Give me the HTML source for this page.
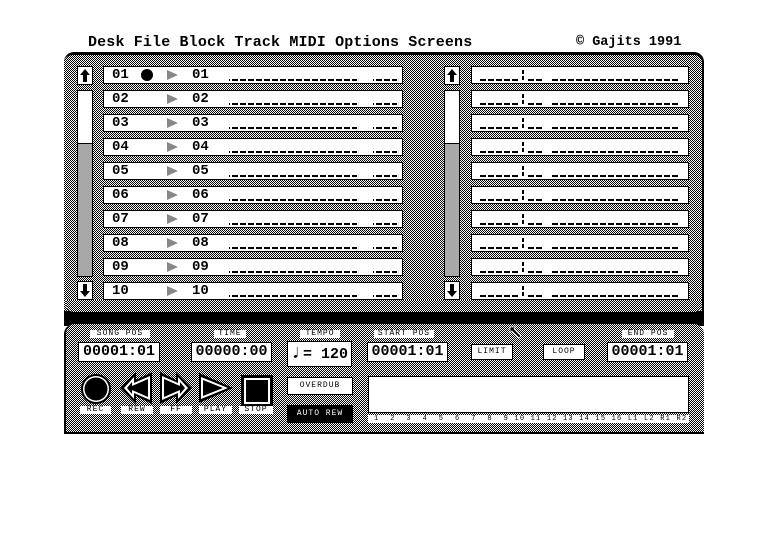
<!DOCTYPE html>
<html><head><meta charset="utf-8"><style>
*{margin:0;padding:0;box-sizing:border-box}
body{width:768px;height:540px;background:#fff;position:relative;overflow:hidden;font-family:"Liberation Mono",monospace;font-weight:bold;color:#000}
.a{position:absolute}
.d{background:repeating-conic-gradient(#000 0 25%,#fff 0 50%) 0 0/2px 2px}
.row{position:absolute;background:#fff;border:1px solid #000;height:18px;font-size:14px;line-height:17px;white-space:pre}
.sb{position:absolute;background:#fff;border:1px solid #000}
.sb.dot{background:#a8a8a8}
.n{position:absolute;font-size:14px;line-height:17px}
.lbl{position:absolute;background:#fff;font-size:8px;line-height:8px;height:8px;text-align:center;font-weight:normal;letter-spacing:1px}
.fld{position:absolute;background:#fff;border:1px solid #000;font-size:15px;text-align:center;line-height:18px}
.btn{position:absolute;background:#fff;border:1px solid #000;font-size:8px;text-align:center;font-weight:normal;letter-spacing:1px}
</style></head><body>
<div class="a" style="left:88px;top:34px;font-size:15px;line-height:18px;letter-spacing:0.15px;white-space:pre">Desk File Block Track MIDI Options Screens</div>
<div class="a" style="left:576px;top:34px;font-size:13.5px;line-height:18px;white-space:pre">© Gajits 1991</div>

<div class="a d" style="left:64px;top:52px;width:640px;height:262px;border-top:3px solid #000;border-top-left-radius:10px;border-top-right-radius:10px;border-right:2px solid #000"></div>
<div class="a" style="left:64px;top:311px;width:640px;height:15px;background:#000"></div>
<div class="a d" style="left:66px;top:300px;width:636px;height:12px;border-bottom-left-radius:8px;border-bottom-right-radius:8px"></div>
<div class="a d" style="left:64px;top:324px;width:640px;height:110px;border-top-left-radius:10px;border-top-right-radius:10px;border-bottom:2px solid #000;border-left:2px solid #000"></div>

<div class="sb" style="left:77px;top:66px;width:16px;height:19px"></div>
<svg class="a" style="left:79px;top:68px" width="12" height="15"><path d="M6 1 L11 7 L8 7 L8 14 L4 14 L4 7 L1 7Z" fill="#000"/></svg>
<div class="sb dot" style="left:77px;top:90px;width:16px;height:187px"></div>
<div class="sb" style="left:77px;top:90px;width:16px;height:54px"></div>
<div class="sb" style="left:77px;top:281px;width:16px;height:19px"></div>
<svg class="a" style="left:79px;top:283px" width="12" height="15"><path d="M6 14 L11 8 L8 8 L8 1 L4 1 L4 8 L1 8Z" fill="#000"/></svg>
<div class="sb" style="left:444px;top:66px;width:16px;height:19px"></div>
<svg class="a" style="left:446px;top:68px" width="12" height="15"><path d="M6 1 L11 7 L8 7 L8 14 L4 14 L4 7 L1 7Z" fill="#000"/></svg>
<div class="sb dot" style="left:444px;top:90px;width:16px;height:187px"></div>
<div class="sb" style="left:444px;top:90px;width:16px;height:54px"></div>
<div class="sb" style="left:444px;top:281px;width:16px;height:19px"></div>
<svg class="a" style="left:446px;top:283px" width="12" height="15"><path d="M6 14 L11 8 L8 8 L8 1 L4 1 L4 8 L1 8Z" fill="#000"/></svg>

<div class="row" style="left:103px;top:66px;width:300px"></div>
<div class="row" style="left:103px;top:90px;width:300px"></div>
<div class="row" style="left:103px;top:114px;width:300px"></div>
<div class="row" style="left:103px;top:138px;width:300px"></div>
<div class="row" style="left:103px;top:162px;width:300px"></div>
<div class="row" style="left:103px;top:186px;width:300px"></div>
<div class="row" style="left:103px;top:210px;width:300px"></div>
<div class="row" style="left:103px;top:234px;width:300px"></div>
<div class="row" style="left:103px;top:258px;width:300px"></div>
<div class="row" style="left:103px;top:282px;width:300px"></div>
<div class="n" style="left:112px;top:67px">01</div><div class="n" style="left:192px;top:67px">01</div>
<div class="n" style="left:112px;top:91px">02</div><div class="n" style="left:192px;top:91px">02</div>
<div class="n" style="left:112px;top:115px">03</div><div class="n" style="left:192px;top:115px">03</div>
<div class="n" style="left:112px;top:139px">04</div><div class="n" style="left:192px;top:139px">04</div>
<div class="n" style="left:112px;top:163px">05</div><div class="n" style="left:192px;top:163px">05</div>
<div class="n" style="left:112px;top:187px">06</div><div class="n" style="left:192px;top:187px">06</div>
<div class="n" style="left:112px;top:211px">07</div><div class="n" style="left:192px;top:211px">07</div>
<div class="n" style="left:112px;top:235px">08</div><div class="n" style="left:192px;top:235px">08</div>
<div class="n" style="left:112px;top:259px">09</div><div class="n" style="left:192px;top:259px">09</div>
<div class="n" style="left:112px;top:283px">10</div><div class="n" style="left:192px;top:283px">10</div>
<div class="a" style="left:141px;top:69px;width:12px;height:12px;border-radius:50%;background:#000"></div>
<svg class="a" style="left:166px;top:66px" width="14" height="240">
<g fill="#888"><path d="M1 4 L12 9 L1 14Z"/><path d="M1 28 L12 33 L1 38Z"/><path d="M1 52 L12 57 L1 62Z"/><path d="M1 76 L12 81 L1 86Z"/><path d="M1 100 L12 105 L1 110Z"/><path d="M1 124 L12 129 L1 134Z"/><path d="M1 148 L12 153 L1 158Z"/><path d="M1 172 L12 177 L1 182Z"/><path d="M1 196 L12 201 L1 206Z"/><path d="M1 220 L12 225 L1 230Z"/></g></svg>

<div class="row" style="left:471px;top:66px;width:218px"></div>
<div class="row" style="left:471px;top:90px;width:218px"></div>
<div class="row" style="left:471px;top:114px;width:218px"></div>
<div class="row" style="left:471px;top:138px;width:218px"></div>
<div class="row" style="left:471px;top:162px;width:218px"></div>
<div class="row" style="left:471px;top:186px;width:218px"></div>
<div class="row" style="left:471px;top:210px;width:218px"></div>
<div class="row" style="left:471px;top:234px;width:218px"></div>
<div class="row" style="left:471px;top:258px;width:218px"></div>
<div class="row" style="left:471px;top:282px;width:218px"></div>

<svg class="a" style="left:0;top:0" width="768" height="320">
<defs>
<pattern id="p" width="8" height="2" patternUnits="userSpaceOnUse"><rect width="6" height="2" fill="#000"/></pattern>
<g id="L"><rect x="229" y="12" width="128" height="2" fill="url(#p)"/><rect x="373" y="12" width="24" height="2" fill="url(#p)"/></g>
<g id="R"><rect x="480" y="12" width="40" height="2" fill="url(#p)"/><rect x="522" y="3" width="2" height="4" fill="#000"/><rect x="522" y="9" width="2" height="4" fill="#000"/><rect x="527" y="12" width="16" height="2" fill="url(#p)"/><rect x="552" y="12" width="128" height="2" fill="url(#p)"/></g>
</defs>
<g transform="translate(0,67)"><use href="#L"/><use href="#R"/></g>
<g transform="translate(0,91)"><use href="#L"/><use href="#R"/></g>
<g transform="translate(0,115)"><use href="#L"/><use href="#R"/></g>
<g transform="translate(0,139)"><use href="#L"/><use href="#R"/></g>
<g transform="translate(0,163)"><use href="#L"/><use href="#R"/></g>
<g transform="translate(0,187)"><use href="#L"/><use href="#R"/></g>
<g transform="translate(0,211)"><use href="#L"/><use href="#R"/></g>
<g transform="translate(0,235)"><use href="#L"/><use href="#R"/></g>
<g transform="translate(0,259)"><use href="#L"/><use href="#R"/></g>
<g transform="translate(0,283)"><use href="#L"/><use href="#R"/></g>
</svg>

<div class="lbl" style="left:90px;top:330px;width:60px">SONG POS</div>
<div class="lbl" style="left:214px;top:330px;width:32px">TIME</div>
<div class="lbl" style="left:300px;top:330px;width:40px">TEMPO</div>
<div class="lbl" style="left:374px;top:330px;width:60px">START POS</div>
<div class="lbl" style="left:622px;top:330px;width:52px">END POS</div>
<div class="fld" style="left:78px;top:342px;width:82px;height:20px">00001:01</div>
<div class="fld" style="left:191px;top:342px;width:81px;height:20px">00000:00</div>
<div class="fld" style="left:287px;top:341px;width:65px;height:26px;line-height:24px"><span style="font-size:20px">♩</span>= 120</div>
<div class="fld" style="left:367px;top:342px;width:81px;height:20px">00001:01</div>
<div class="btn" style="left:471px;top:344px;width:42px;height:16px;line-height:14px">LIMIT</div>
<div class="btn" style="left:543px;top:344px;width:42px;height:16px;line-height:14px">LOOP</div>
<div class="fld" style="left:607px;top:342px;width:81px;height:20px">00001:01</div>

<div class="btn" style="left:287px;top:377px;width:66px;height:18px;line-height:16px">OVERDUB</div>
<div class="btn" style="left:287px;top:405px;width:66px;height:18px;line-height:16px;background:#000;color:#fff">AUTO REW</div>
<div class="a" style="left:368px;top:376px;width:321px;height:37px;background:#fff;border:1px solid #000"></div>
<div class="a" style="left:368px;top:415px;width:321px;height:8px;background:#fff;font-size:7px;line-height:8px;font-weight:normal;white-space:pre;padding-left:6px;letter-spacing:1.2px">1  2  3  4  5  6  7  8  9 10 11 12 13 14 15 16 L1 L2 R1 R2</div>

<svg class="a" style="left:78px;top:370px" width="200" height="40">
<circle cx="18" cy="19" r="15" fill="#000"/><circle cx="18" cy="19" r="13" fill="#fff"/><circle cx="18" cy="19" r="11.5" fill="#000"/>
<g transform="translate(42,2)"><path d="M0 16 L16 0 L16 8 L32 0 L32 32 L16 24 L16 32Z" fill="#000"/><path d="M4 16 L14 5 L14 11 L30 4 L30 28 L14 21 L14 27Z" fill="#fff"/><path d="M7 16 L12 10 L12 14 L28 7 L28 25 L12 18 L12 22Z" fill="#000"/></g>
<g transform="translate(82,2)"><path d="M32 16 L16 0 L16 8 L0 0 L0 32 L16 24 L16 32Z" fill="#000"/><path d="M28 16 L18 5 L18 11 L2 4 L2 28 L18 21 L18 27Z" fill="#fff"/><path d="M25 16 L20 10 L20 14 L4 7 L4 25 L20 18 L20 22Z" fill="#000"/></g>
<g transform="translate(121,3)"><path d="M0 0 L34 15 L0 30Z" fill="#000"/><path d="M2 4 L29 15 L2 26Z" fill="#fff"/><path d="M4 7 L24 15 L4 23Z" fill="#000"/></g>
<rect x="163" y="5" width="32" height="32" fill="#000"/><rect x="166" y="8" width="26" height="26" fill="#fff"/><rect x="168" y="10" width="22" height="22" fill="#000"/>
</svg>
<div class="lbl" style="left:80px;top:406px;width:31px">REC</div>
<div class="lbl" style="left:121px;top:406px;width:32px">REW</div>
<div class="lbl" style="left:160px;top:406px;width:32px">FF</div>
<div class="lbl" style="left:199px;top:406px;width:33px">PLAY</div>
<div class="lbl" style="left:239px;top:406px;width:34px">STOP</div>

<svg class="a" style="left:509px;top:326px" width="14" height="14"><path d="M1 1 L7 1 L5 3 L12 10 L10 12 L3 5 L1 7Z" fill="#000" stroke="#fff" stroke-width="0.8"/></svg>
</body></html>
